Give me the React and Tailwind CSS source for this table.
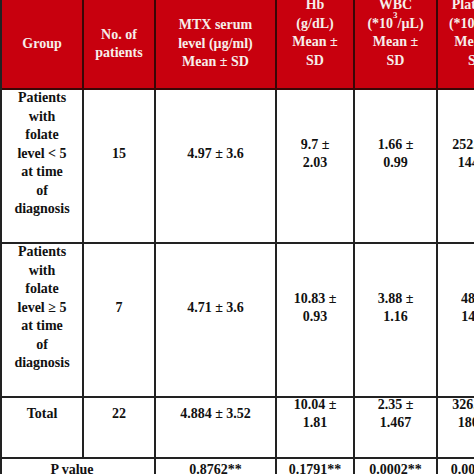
import React from "react";

const F = { fontFamily: '"Liberation Serif", "Times New Roman", serif' };

function H({ children, pb = "pb-0" }) {
  return (
    <div className={`bg-[#c8000e] text-[#f6eeea] border-r-2 border-b-2 border-r-[#3a0606] border-b-[#3a0606] flex flex-col items-center justify-center text-center ${pb}`}>
      <div>{children}</div>
    </div>
  );
}

function C({ children, pb = "pb-6" }) {
  return (
    <div className={`border-r-2 border-b-2 border-[#222] flex flex-col items-center justify-center text-center text-[#111] ${pb}`}>
      <div>{children}</div>
    </div>
  );
}

function P({ children, extra = "" }) {
  return (
    <div className={`border-r-2 border-b-2 border-[#222] flex justify-center items-start pt-[2px] text-[#111] ${extra}`}>
      <div>{children}</div>
    </div>
  );
}

const Sup = ({ children }) => (
  <sup className="text-[9px] leading-none align-[5px]">{children}</sup>
);

export default function App() {
  return (
    <div className="w-[474px] h-[474px] overflow-hidden bg-white" style={F}>
      <div className="w-[520px] border-l-2 border-[#222] grid grid-cols-[82px_72px_121px_78px_83px_80px] grid-rows-[90px_154px_154px_61px_40px] text-[14px] leading-[18.5px] font-bold">
        <H>Group</H>
        <H>No. of<br />patients</H>
        <H>MTX serum<br />level (µg/ml)<br />Mean ± SD</H>
        <H pb="pb-[22px]">Hb<br />(g/dL)<br />Mean ±<br />SD</H>
        <H pb="pb-[22px]">WBC<br />(*10<Sup>3</Sup>/µL)<br />Mean ±<br />SD</H>
        <H pb="pb-[22px]">Platelets<br />(*10<Sup>3</Sup>/µL)<br />Mean ±<br />SD</H>

        <C>Patients<br />with<br />folate<br />level &lt; 5<br />at time<br />of<br />diagnosis</C>
        <C>15</C>
        <C>4.97 ± 3.6</C>
        <C>9.7 ±<br />2.03</C>
        <C>1.66 ±<br />0.99</C>
        <C>252.73 ±<br />144.39</C>

        <C>Patients<br />with<br />folate<br />level ≥ 5<br />at time<br />of<br />diagnosis</C>
        <C>7</C>
        <C>4.71 ± 3.6</C>
        <C>10.83 ±<br />0.93</C>
        <C>3.88 ±<br />1.16</C>
        <C>484 ±<br />145.2</C>

        <C pb="pb-[27px]">Total</C>
        <C pb="pb-[27px]">22</C>
        <C pb="pb-[27px]">4.884 ± 3.52</C>
        <C pb="pb-[27px]">10.04 ±<br />1.81</C>
        <C pb="pb-[27px]">2.35 ±<br />1.467</C>
        <C pb="pb-[27px]">326.41 ±<br />180.25</C>

        <P extra="col-span-2 pr-3">P value</P>
        <P>0.8762**</P>
        <P>0.1791**</P>
        <P>0.0002**</P>
        <P>0.0046**</P>
      </div>
    </div>
  );
}
